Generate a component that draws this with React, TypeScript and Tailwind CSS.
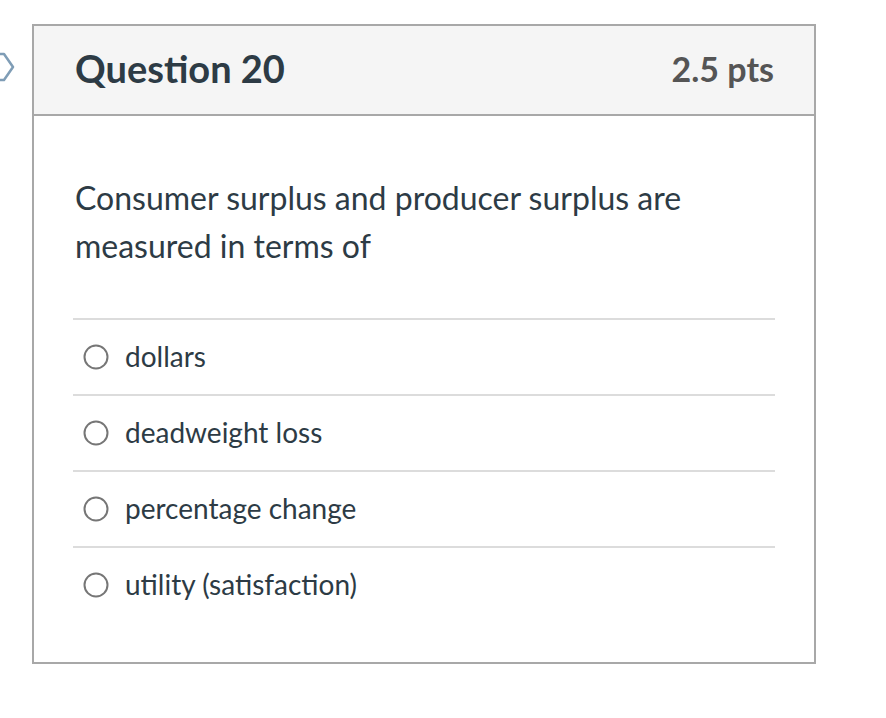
const answers = ["dollars", "deadweight loss", "percentage change", "utility (satisfaction)"];

function Chevron() {
  return (
    <svg width="16" height="30" viewBox="0 0 16 30" className="shrink-0">
      <path
        d="M-6 2 H4 L13 15 L4 28 H-6"
        fill="none"
        stroke="#7f9db6"
        strokeWidth="2.5"
        strokeLinejoin="round"
      />
    </svg>
  );
}

function Radio() {
  return (
    <svg width="26" height="26" viewBox="0 0 26 26" className="shrink-0">
      <circle cx="13" cy="13" r="11.5" fill="#fff" stroke="#767676" strokeWidth="2" />
    </svg>
  );
}

export default function App() {
  return (
    <div
      className="flex items-start bg-white w-[886px] h-[718px] pt-[24px]"
      style={{ fontFamily: "Lato, 'Open Sans', sans-serif" }}
    >
      <div className="w-[32px] pt-[28px]">
        <Chevron />
      </div>
      <div className="w-[784px] border-2 border-[#a8a8a8] bg-white">
        <div className="flex items-center justify-between h-[90px] bg-[#f5f5f5] border-b-2 border-[#a8a8a8] pl-[41px] pr-[40px] pb-[4px]">
          <h2 className="text-[38px] font-bold text-[#2d3b45]">Question 20</h2>
          <span className="text-[34px] font-bold text-[#555555]">2.5 pts</span>
        </div>
        <div className="pl-[41px] pr-[39px] pt-[58px] pb-[40px]">
          <p className="text-[32px] leading-[48px] text-[#2d3b45] pr-[60px]">
            Consumer surplus and producer surplus are measured in terms of
          </p>
          <div className="mt-[48px] -ml-[2px]">
            {answers.map((a) => (
              <div
                key={a}
                className="flex items-center gap-[16px] h-[76px] border-t-2 border-[#dcdcdc] pl-[10px]"
              >
                <Radio />
                <span className="text-[28px] text-[#2d3b45] -mt-[2px]">{a}</span>
              </div>
            ))}
          </div>
        </div>
      </div>
    </div>
  );
}
